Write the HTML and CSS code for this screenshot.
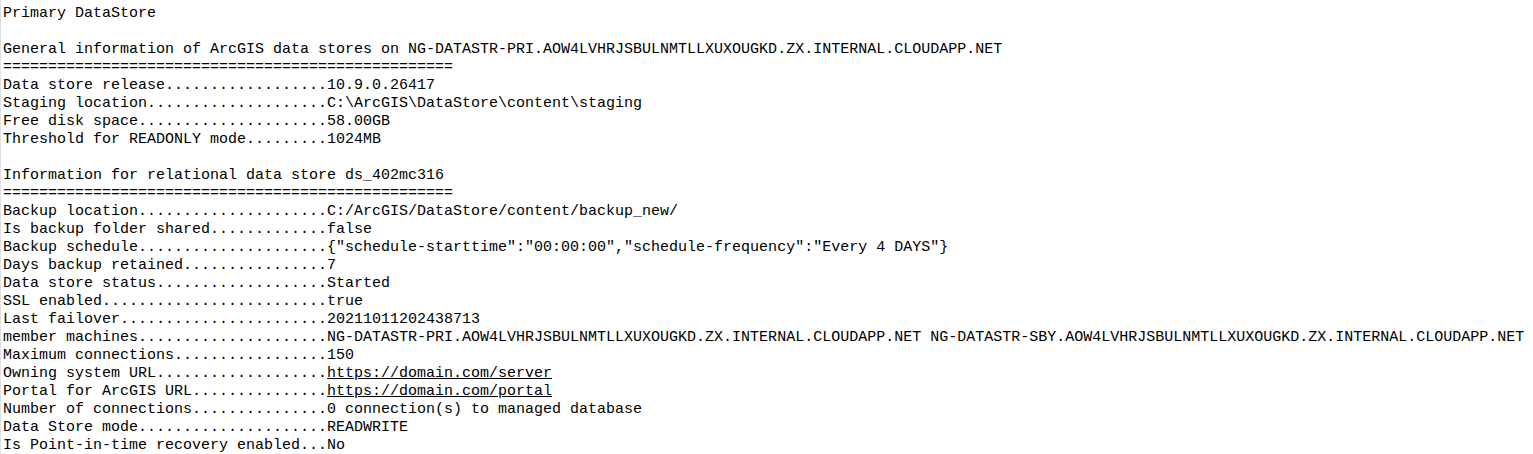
FILE: index.html
```html
<!DOCTYPE html>
<html>
<head>
<meta charset="utf-8">
<link rel="stylesheet" href="styles.css">
</head>
<body>
<div class="page">
<pre class="log">Primary DataStore

General information of ArcGIS data stores on NG-DATASTR-PRI.AOW4LVHRJSBULNMTLLXUXOUGKD.ZX.INTERNAL.CLOUDAPP.NET
==================================================
Data store release..................10.9.0.26417
Staging location....................C:\ArcGIS\DataStore\content\staging
Free disk space.....................58.00GB
Threshold for READONLY mode.........1024MB

Information for relational data store ds_402mc316
==================================================
Backup location.....................C:/ArcGIS/DataStore/content/backup_new/
Is backup folder shared.............false
Backup schedule.....................{"schedule-starttime":"00:00:00","schedule-frequency":"Every 4 DAYS"}
Days backup retained................7
Data store status...................Started
SSL enabled.........................true
Last failover.......................20211011202438713
member machines.....................NG-DATASTR-PRI.AOW4LVHRJSBULNMTLLXUXOUGKD.ZX.INTERNAL.CLOUDAPP.NET NG-DATASTR-SBY.AOW4LVHRJSBULNMTLLXUXOUGKD.ZX.INTERNAL.CLOUDAPP.NET
Maximum connections.................150
Owning system URL...................<a class="link" href="#">https://domain.com/server</a>
Portal for ArcGIS URL...............<a class="link" href="#">https://domain.com/portal</a>
Number of connections...............0 connection(s) to managed database
Data Store mode.....................READWRITE
Is Point-in-time recovery enabled...No</pre>
</div>
</body>
</html>
```

FILE: styles.css
```css
html, body {
  margin: 0;
  padding: 0;
  background: #ffffff;
}

.page {
  border-left: 1px solid #e0e0e0;
  padding: 5px 0 0 2px;
  min-height: 449px;
}

.log {
  margin: 0;
  font-family: "Liberation Mono", "Courier New", monospace;
  font-size: 15px;
  line-height: 18px;
  color: #000000;
  white-space: pre;
}

.link {
  color: #000000;
  text-decoration: underline;
}
```
